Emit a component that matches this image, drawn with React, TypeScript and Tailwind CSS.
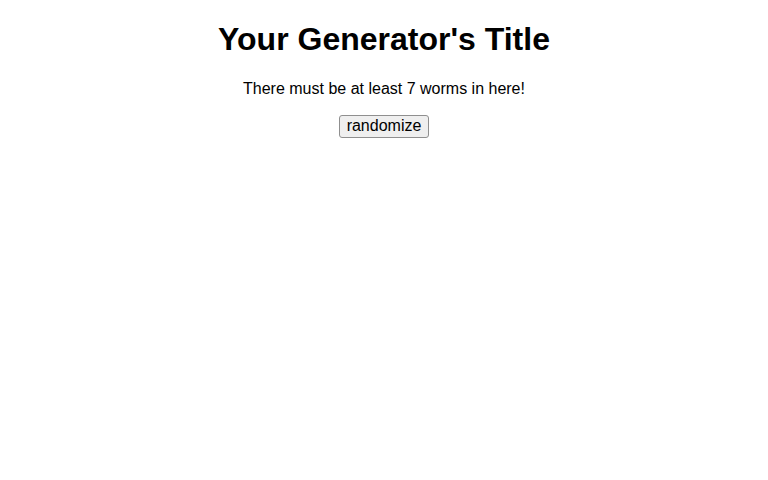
export default function App() {
  return (
    <div className="min-h-screen bg-white text-black text-center" style={{ fontFamily: '"Liberation Sans", Arial, sans-serif' }}>
      <div className="pt-[21.44px]">
        <h1 className="text-[32px] font-bold leading-[37px] m-0">Your Generator's Title</h1>
        <p className="mt-[21.44px] text-[16px] leading-[18.4px]">There must be at least 7 worms in here!</p>
        <div className="mt-[16px]">
          <button className="text-[16px] leading-[18.4px] px-[7px] py-[1.5px] border border-[#8f8f8f] rounded-[3px] bg-[#efefef] text-black">
            randomize
          </button>
        </div>
      </div>
    </div>
  );
}
